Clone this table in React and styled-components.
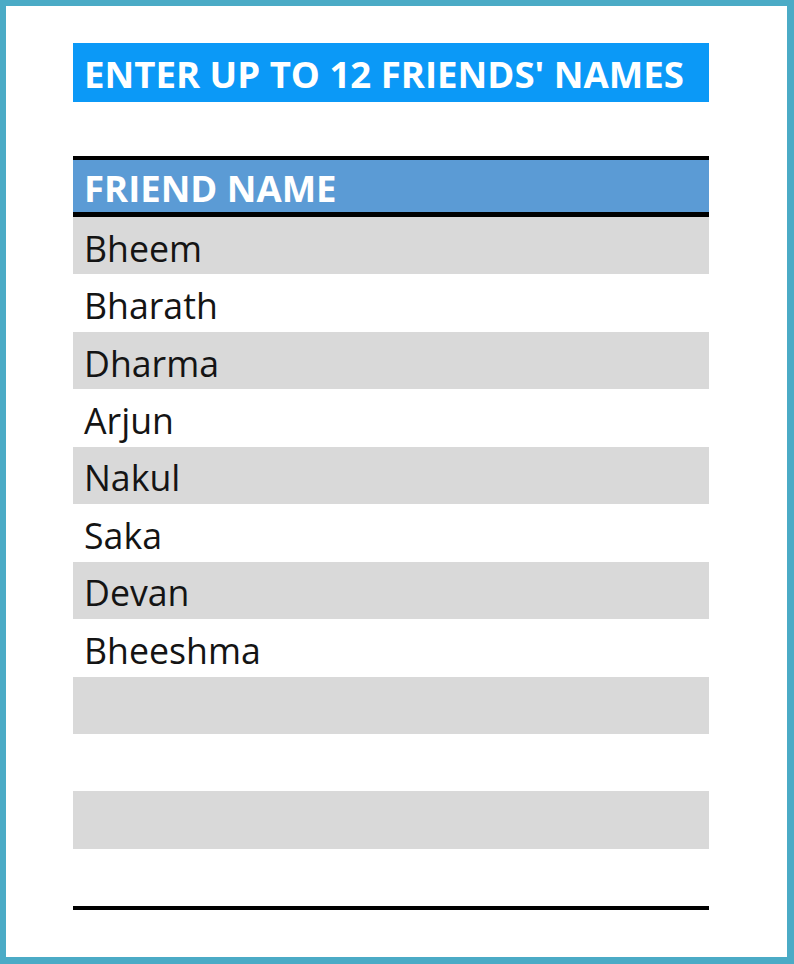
import React from "react";
import styled, { createGlobalStyle } from "styled-components";

const GlobalStyle = createGlobalStyle`
  html, body {
    margin: 0;
    padding: 0;
    background: #ffffff;
  }
  * {
    box-sizing: border-box;
  }
`;

const friends = [
  "Bheem",
  "Bharath",
  "Dharma",
  "Arjun",
  "Nakul",
  "Saka",
  "Devan",
  "Bheeshma",
  "",
  "",
  "",
  "",
];

const App = () => {
  return (
    <>
      <GlobalStyle />
      <Frame>
        <Title>ENTER UP TO 12 FRIENDS' NAMES</Title>
        <Table>
          <HeaderCell>FRIEND NAME</HeaderCell>
          {friends.map((name, i) => (
            <Row key={i} $shaded={i % 2 === 0}>
              {name}
            </Row>
          ))}
        </Table>
      </Frame>
    </>
  );
};

export default App;

const Frame = styled.div`
  width: 794px;
  height: 964px;
  border: 6px solid #4babc6;
  border-right-width: 7px;
  border-bottom-width: 7px;
  padding: 37px 0 0 67px;
  background: #ffffff;
  font-family: "Open Sans", "Liberation Sans", sans-serif;
`;

const Title = styled.div`
  width: 636px;
  height: 59px;
  display: flex;
  align-items: center;
  padding: 2px 0 0 11px;
  background: #0b99f7;
  color: #ffffff;
  font-weight: 700;
  font-size: 36.6px;
  white-space: nowrap;
`;

const Table = styled.div`
  width: 636px;
  margin-top: 54px;
  display: flex;
  flex-direction: column;
  border-top: 4px solid #000000;
  border-bottom: 4px solid #000000;
`;

const HeaderCell = styled.div`
  height: 57px;
  display: flex;
  align-items: center;
  padding: 3px 0 0 11px;
  background: #5b9bd5;
  color: #ffffff;
  font-weight: 700;
  font-size: 36.5px;
  border-bottom: 5px solid #000000;
`;

const Row = styled.div`
  height: 57.45px;
  display: flex;
  align-items: center;
  padding: 4px 0 0 11px;
  background: ${(p) => (p.$shaded ? "#d9d9d9" : "#ffffff")};
  color: #141414;
  font-size: 35.7px;
`;
